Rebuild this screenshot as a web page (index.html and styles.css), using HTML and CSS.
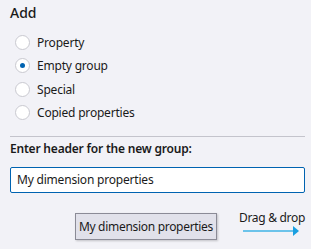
FILE: index.html
```html
<!DOCTYPE html>
<html>
<head>
<meta charset="utf-8">
<link rel="stylesheet" href="styles.css">
</head>
<body>
<div class="panel">
  <div class="title">Add</div>
  <div class="radios">
    <div class="radio-row"><span class="radio"></span><span class="label">Property</span></div>
    <div class="radio-row"><span class="radio checked"></span><span class="label">Empty group</span></div>
    <div class="radio-row"><span class="radio"></span><span class="label">Special</span></div>
    <div class="radio-row"><span class="radio"></span><span class="label">Copied properties</span></div>
  </div>
  <div class="sep"></div>
  <div class="field-label">Enter header for the new group:</div>
  <div class="input">My dimension properties</div>
  <div class="bottom">
    <div class="drag-btn">My dimension properties</div>
    <div class="dnd">
      <div class="dnd-text">Drag &amp; drop</div>
      <svg class="arrow" width="60" height="10" viewBox="0 0 60 10">
        <rect x="0" y="4" width="52" height="2" fill="#6cc3ea"/>
        <polygon points="50,0 56,5 50,10" fill="#1a9fe0"/>
      </svg>
    </div>
  </div>
</div>
</body>
</html>
```
FILE: styles.css
```css
html, body {
  margin: 0;
  padding: 0;
  background: #f2f2f7;
}
body {
  font-family: "Noto Sans", "Open Sans", sans-serif;
  color: #1a1a1a;
  width: 311px;
  height: 249px;
  overflow: hidden;
}
.panel {
  padding: 3px 6px 0 10px;
  display: flex;
  flex-direction: column;
}
.title {
  font-size: 14px;
  line-height: 20px;
  font-weight: 500;
}
.radios {
  display: flex;
  flex-direction: column;
  margin-top: 8px;
  margin-left: 5px;
}
.radio-row {
  display: flex;
  align-items: center;
  height: 23.3px;
}
.radio {
  width: 13px;
  height: 13px;
  border-radius: 50%;
  border: 1px solid #c9c9d0;
  background: #fff;
  box-sizing: content-box;
  display: flex;
  align-items: center;
  justify-content: center;
  margin-right: 7px;
}
.radio.checked::after {
  content: "";
  width: 5px;
  height: 5px;
  border-radius: 50%;
  background: #0063b1;
}
.label {
  font-size: 12px;
  letter-spacing: -0.2px;
}
.sep {
  height: 1px;
  background: #c4c4cc;
  margin-top: 12px;
}
.field-label {
  font-size: 12px;
  font-weight: 600;
  letter-spacing: -0.2px;
  margin-top: 3px;
  line-height: 18px;
}
.input {
  margin-top: 9px;
  height: 24px;
  border: 1px solid #0063b1;
  border-radius: 2px;
  background: #fff;
  font-size: 12px;
  letter-spacing: -0.2px;
  line-height: 24px;
  padding-left: 6px;
}
.bottom {
  display: flex;
  align-items: flex-start;
  margin-top: 20px;
}
.drag-btn {
  margin-left: 65px;
  width: 142px;
  height: 25px;
  background: #e1e1ea;
  border: 1px solid #8b8b96;
  box-shadow: 1px 1px 2px rgba(0,0,0,0.2);
  font-size: 12px;
  letter-spacing: -0.3px;
  line-height: 25px;
  text-align: center;
  white-space: nowrap;
}
.dnd {
  margin-left: 22px;
  margin-top: -3px;
  display: flex;
  flex-direction: column;
  align-items: flex-start;
}
.dnd-text {
  font-size: 12px;
  letter-spacing: -0.3px;
  line-height: 16px;
  white-space: nowrap;
}
.arrow {
  margin-left: 4px;
  margin-top: 0;
  display: block;
}
```
